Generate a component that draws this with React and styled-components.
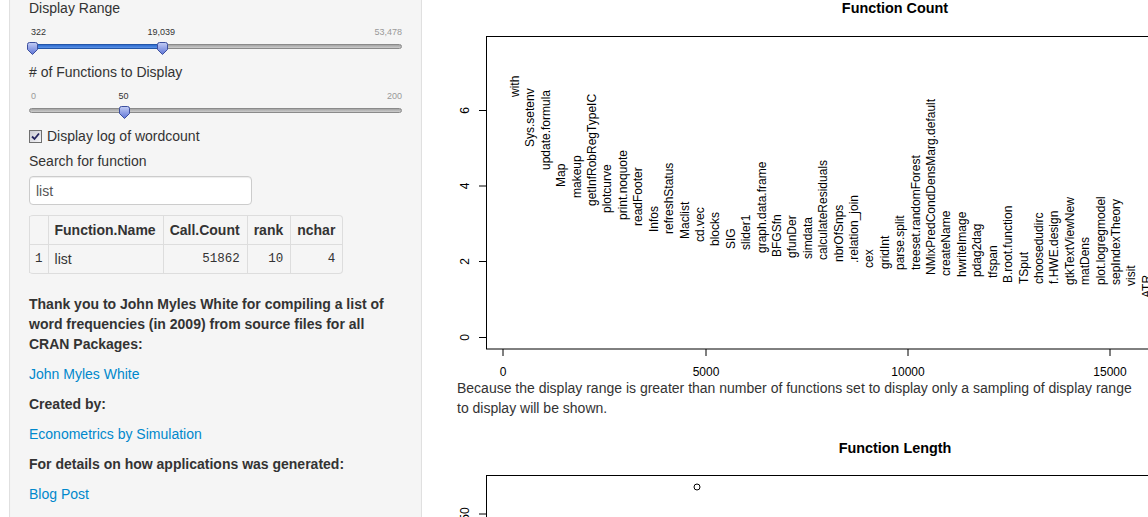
import React from "react";
import styled, { createGlobalStyle } from "styled-components";

const GlobalStyle = createGlobalStyle`
  html, body {
    margin: 0;
    overflow: hidden;
    background: #fff;
  }
  body {
    font-family: "Liberation Sans", Arial, sans-serif;
    font-size: 14px;
    line-height: 20px;
    color: #333;
  }
`;

const Page = styled.div`
  display: flex;
  align-items: flex-start;
  margin-top: -22px;
  padding-left: 9px;
`;

const Well = styled.div`
  flex: none;
  box-sizing: border-box;
  width: 413px;
  min-height: 620px;
  padding: 19px;
  background: #f5f5f5;
  border: 1px solid #e0e0e0;
  border-radius: 4px;
  box-shadow: inset 0 1px 1px rgba(0, 0, 0, 0.05);
`;

const Main = styled.div`
  flex: none;
  width: 680px;
  margin-left: 35px;
`;

const ControlLabel = styled.div`
  line-height: 20px;
  margin-bottom: ${(p) => (p.$gap ? "5px" : "0")};
`;

const SliderBox = styled.div`
  position: relative;
  height: 44px;
  box-sizing: border-box;
  padding-top: 9px;
`;

const ValueRow = styled.div`
  position: relative;
  height: 10px;
  font-size: 9px;
  line-height: 10px;
`;

const Mark = styled.span`
  position: absolute;
  top: 0;
  white-space: nowrap;
  color: ${(p) => (p.$dark ? "#333" : "#999")};
  ${(p) => p.$align === "left" && "left: 2px;"}
  ${(p) => p.$align === "right" && "right: 0;"}
  ${(p) => p.$align === "center" && "transform: translateX(-50%);"}
`;

const Track = styled.div`
  position: relative;
  margin-top: 7px;
  height: 5px;
  box-sizing: border-box;
  border: 1px solid #8a8a8a;
  border-radius: 3px;
  background: linear-gradient(#a4a4a4, #cdcdcd);
`;

const TrackFill = styled.div`
  position: absolute;
  top: -1px;
  bottom: -1px;
  box-sizing: border-box;
  border: 1px solid #2456a8;
  border-radius: 3px;
  background: linear-gradient(#2c6ad0, #5d94e6);
`;

const Knob = styled.svg`
  position: absolute;
  top: -3px;
  width: 11px;
  height: 13px;
  overflow: visible;
`;

const CheckRow = styled.label`
  display: flex;
  align-items: center;
  height: 20px;
  margin-bottom: 5px;
`;

const CheckBox = styled.span`
  box-sizing: border-box;
  width: 13px;
  height: 13px;
  margin: 1px 5px 0 0;
  border: 1px solid #6f6f6f;
  background: linear-gradient(135deg, #c9c9d2, #f6f6f8);
  display: flex;
  align-items: center;
  justify-content: center;
`;

const TextInput = styled.input`
  display: block;
  box-sizing: border-box;
  width: 223px;
  height: 29px;
  margin: 0 0 10px;
  padding: 4px 6px;
  font-family: inherit;
  font-size: 14px;
  color: #555;
  background: #fff;
  border: 1px solid #ccc;
  border-radius: 4px;
  box-shadow: inset 0 1px 1px rgba(0, 0, 0, 0.075);
  outline: none;
`;

const Table = styled.table`
  border-collapse: separate;
  border-spacing: 0;
  border: 1px solid #ddd;
  border-left: 0;
  border-radius: 4px;
  margin-bottom: 20px;
`;

const Th = styled.th`
  padding: ${(p) => (p.$idx ? "4px 5px" : "4px 7px 4px 6px")};
  border-left: 1px solid #ddd;
  line-height: 20px;
  text-align: left;
  font-weight: bold;
`;

const Td = styled.td`
  padding: ${(p) => (p.$idx ? "4px 5px" : "4px 7px 4px 6px")};
  border-left: 1px solid #ddd;
  border-top: 1px solid #ddd;
  line-height: 20px;
  text-align: ${(p) => (p.$num ? "right" : "left")};
  font-family: ${(p) =>
    p.$num || p.$idx ? '"Liberation Mono", "Courier New", monospace' : "inherit"};
  font-size: ${(p) => (p.$num || p.$idx ? "12.5px" : "14px")};
`;

const Note = styled.p`
  margin: 0 0 10px;
  font-weight: bold;
`;

const Link = styled.a`
  display: block;
  margin-bottom: 10px;
  color: #0088cc;
  text-decoration: none;
`;

const Caption = styled.div`
  line-height: 20px;
`;

const Plot = styled.svg`
  display: block;
  width: 800px;
  height: 400px;
  font-family: "Liberation Sans", Arial, sans-serif;
`;

const TRACK_W = 370;

function fmt(n) {
  return n.toLocaleString("en-US");
}

function Slider({ min, max, values }) {
  const pos = (v) => 2 + ((v - min) / (max - min)) * TRACK_W;
  const inner = values.filter((v) => v !== min && v !== max);
  return (
    <SliderBox>
      <ValueRow>
        <Mark $align="left" $dark={values.includes(min)}>
          {fmt(min)}
        </Mark>
        {inner.map((v) => (
          <Mark key={v} $align="center" $dark style={{ left: pos(v) }}>
            {fmt(v)}
          </Mark>
        ))}
        <Mark $align="right" $dark={values.includes(max)}>
          {fmt(max)}
        </Mark>
      </ValueRow>
      <Track>
        {values.length > 1 && (
          <TrackFill
            style={{ left: pos(values[0]) - 3, width: pos(values[1]) - pos(values[0]) + 3 }}
          />
        )}
        {values.map((v) => (
          <Knob key={v} viewBox="0 0 11 13" style={{ left: pos(v) - 5.5 }}>
            <defs>
              <linearGradient id="knob" x1="0" y1="0" x2="0" y2="1">
                <stop offset="0" stopColor="#c3cdf5" />
                <stop offset="1" stopColor="#5e74d6" />
              </linearGradient>
            </defs>
            <path
              d="M0.5 2.5 Q0.5 0.5 2.5 0.5 H8.5 Q10.5 0.5 10.5 2.5 V7.5 L5.5 12.5 L0.5 7.5 Z"
              fill="url(#knob)"
              stroke="#3c4f9e"
            />
          </Knob>
        ))}
      </Track>
    </SliderBox>
  );
}

const WORDS = [
  ["with", 97], ["Sys.setenv", 147], ["update.formula", 170], ["Map", 187],
  ["makeup", 198], ["getInfRobRegTypeIC", 206], ["plotcurve", 213],
  ["print.noquote", 220], ["readFooter", 226], ["Infos", 232],
  ["refreshStatus", 234], ["Maclist", 239], ["cd.vec", 242], ["blocks", 246],
  ["SIG", 249], ["slider1", 250], ["graph.data.frame", 253], ["BFGSfn", 257],
  ["gfunDer", 258], ["simdata", 259], ["calculateResiduals", 260],
  ["nbrOfSnps", 262], [".relation_join", 263], ["cex", 268], ["gridInt", 269],
  ["parse.split", 270], ["treeset.randomForest", 270],
  ["NMixPredCondDensMarg.default", 275], ["createName", 276],
  ["hwriteImage", 277], ["pdag2dag", 277], ["tfspan", 278],
  ["B.root.function", 283], ["TSput", 284], ["choosedudirc", 284],
  ["f.HWE.design", 284], ["gtkTextViewNew", 285], ["matDens", 285],
  ["plot.logregmodel", 285], ["sepIndexTheory", 285], ["visit", 286],
  ["ATR", 298],
];

function YTick({ y, label }) {
  return (
    <g>
      <line x1="479" x2="486" y1={y} y2={y} stroke="#000" />
      <text
        x="465"
        y={y}
        fontSize="12"
        textAnchor="middle"
        dominantBaseline="central"
        transform={`rotate(-90 465 ${y})`}
      >
        {label}
      </text>
    </g>
  );
}

function CountPlot() {
  return (
    <Plot viewBox="457 -22 800 400">
      <text x="895" y="12.5" fontSize="14.4" fontWeight="bold" textAnchor="middle">
        Function Count
      </text>
      <rect x="486.5" y="36.5" width="900" height="312.5" fill="none" stroke="#000" />
      {[
        [337.5, "0"],
        [261.5, "2"],
        [186, "4"],
        [110.5, "6"],
      ].map(([y, l]) => (
        <YTick key={l} y={y} label={l} />
      ))}
      {[
        [503, "0"],
        [706, "5000"],
        [908, "10000"],
        [1110, "15000"],
      ].map(([x, l]) => (
        <g key={l}>
          <line x1={x} x2={x} y1="349" y2="356" stroke="#000" />
          <text x={x} y="375.5" fontSize="12" textAnchor="middle">
            {l}
          </text>
        </g>
      ))}
      {WORDS.map(([w, y], i) => {
        const x = 515 + 15.41 * i;
        return (
          <text
            key={w}
            x={x}
            y={y}
            fontSize="12"
            dominantBaseline="central"
            transform={`rotate(-90 ${x} ${y})`}
          >
            {w}
          </text>
        );
      })}
    </Plot>
  );
}

function LengthPlot() {
  return (
    <Plot viewBox="457 418 800 400">
      <text x="895" y="452.5" fontSize="14.4" fontWeight="bold" textAnchor="middle">
        Function Length
      </text>
      <rect x="486.5" y="475.5" width="900" height="300" fill="none" stroke="#000" />
      <circle cx="697" cy="487" r="3" fill="none" stroke="#000" />
      <YTick y={514} label="50" />
    </Plot>
  );
}

function App() {
  return (
    <>
      <GlobalStyle />
      <Page>
        <Well>
          <ControlLabel>Display Range</ControlLabel>
          <Slider min={322} max={53478} values={[322, 19039]} />
          <ControlLabel># of Functions to Display</ControlLabel>
          <Slider min={0} max={200} values={[50]} />
          <CheckRow>
            <CheckBox>
              <svg width="9" height="9" viewBox="0 0 9 9">
                <path d="M1 4.5 L3.5 7 L8 1.5" fill="none" stroke="#23235e" strokeWidth="1.8" />
              </svg>
            </CheckBox>
            Display log of wordcount
          </CheckRow>
          <ControlLabel $gap>Search for function</ControlLabel>
          <TextInput defaultValue="list" />
          <Table>
            <thead>
              <tr>
                <Th $idx />
                <Th>Function.Name</Th>
                <Th>Call.Count</Th>
                <Th>rank</Th>
                <Th>nchar</Th>
              </tr>
            </thead>
            <tbody>
              <tr>
                <Td $idx>1</Td>
                <Td>list</Td>
                <Td $num>51862</Td>
                <Td $num>10</Td>
                <Td $num>4</Td>
              </tr>
            </tbody>
          </Table>
          <Note>
            Thank you to John Myles White for compiling a list of word frequencies (in
            2009) from source files for all CRAN Packages:
          </Note>
          <Link href="#">John Myles White</Link>
          <Note>Created by:</Note>
          <Link href="#">Econometrics by Simulation</Link>
          <Note>For details on how applications was generated:</Note>
          <Link href="#">Blog Post</Link>
        </Well>
        <Main>
          <CountPlot />
          <Caption>
            Because the display range is greater than number of functions set to display
            only a sampling of display range to display will be shown.
          </Caption>
          <LengthPlot />
        </Main>
      </Page>
    </>
  );
}

export default App;
